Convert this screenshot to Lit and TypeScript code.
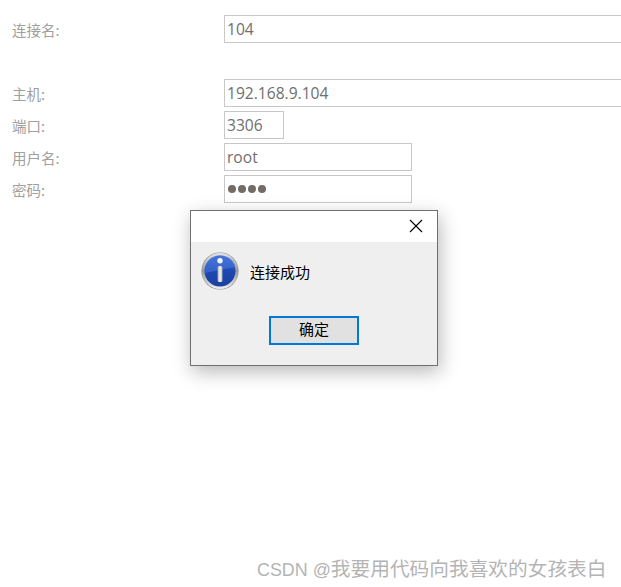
import { LitElement, html, css } from "lit";
import { customElement } from "lit/decorators.js";

@customElement("app-root")
export class AppRoot extends LitElement {
  static styles = css`
    :host {
      display: block;
      position: relative;
      width: 621px;
      height: 587px;
      overflow: hidden;
      background: #fff;
      font-family: "Open Sans", "Noto Sans CJK SC", sans-serif;
    }
    .form {
      display: flex;
      flex-direction: column;
      gap: 4px;
      padding: 15px 0 0 12px;
    }
    .row {
      display: flex;
      align-items: center;
      height: 28px;
    }
    .row.first {
      margin-bottom: 32px;
    }
    .label {
      width: 212px;
      flex: none;
      font-size: 14.5px;
      color: #a0a0a0;
      font-family: "Noto Sans CJK SC", sans-serif;
    }
    .field {
      box-sizing: border-box;
      height: 28px;
      border: 1px solid #c8c8c8;
      padding: 1px 2px 0;
      font-size: 15.6px;
      line-height: 24px;
      color: #6f6f6f;
      flex: none;
      white-space: nowrap;
      background: #fff;
    }
    .wide {
      width: 420px;
      margin-right: -30px;
      border-right: none;
    }
    .port {
      width: 60px;
    }
    .mid {
      width: 188px;
    }
    .dots {
      display: flex;
      align-items: center;
      gap: 2px;
      padding: 0 0 0 3px;
    }
    .dot {
      width: 8px;
      height: 8px;
      border-radius: 50%;
      background: #736b66;
    }
    .dialog {
      position: absolute;
      left: 190px;
      top: 210px;
      width: 248px;
      height: 156px;
      box-sizing: border-box;
      border: 1px solid #6f6f6f;
      background: #efefef;
      box-shadow: 2px 6px 18px rgba(0, 0, 0, 0.28);
      display: flex;
      flex-direction: column;
    }
    .titlebar {
      height: 31px;
      box-sizing: border-box;
      flex: none;
      background: #fff;
      display: flex;
      justify-content: flex-end;
      align-items: center;
      padding: 0 14px 1px 0;
    }
    .close {
      display: block;
      width: 14px;
      height: 14px;
    }
    .message {
      display: flex;
      align-items: center;
      gap: 11px;
      padding: 10px 0 0 10px;
      height: 38px;
      font-size: 15px;
      color: #000;
      font-family: "Noto Sans CJK SC", sans-serif;
    }
    .info {
      display: block;
      width: 38px;
      height: 38px;
      flex: none;
    }
    .actions {
      display: flex;
      justify-content: center;
      padding-top: 26px;
      padding-right: 1px;
    }
    .ok {
      box-sizing: border-box;
      width: 90px;
      height: 29px;
      border: 2px solid #0078d7;
      background: #e1e1e1;
      font-size: 15px;
      line-height: 22px;
      color: #000;
      padding: 0 0 3px 1px;
      font-family: "Noto Sans CJK SC", sans-serif;
    }
    .mark {
      position: absolute;
      left: 257px;
      top: 555px;
      font-size: 19.7px;
      line-height: 26px;
      white-space: nowrap;
      color: #b4b4b4;
      font-family: "Noto Sans CJK SC", sans-serif;
    }
    .mark .latin {
      font-size: 17.9px;
      font-family: "Liberation Sans", sans-serif;
    }
  `;

  private row(label: string, value: unknown, cls: string, rowCls = "") {
    return html`<div class="row ${rowCls}">
      <div class="label">${label}</div>
      <div class="field ${cls}">${value}</div>
    </div>`;
  }

  render() {
    return html`
      <div class="form">
        ${this.row("连接名:", "104", "wide", "first")}
        ${this.row("主机:", "192.168.9.104", "wide")}
        ${this.row("端口:", "3306", "port")}
        ${this.row("用户名:", "root", "mid")}
        <div class="row">
          <div class="label">密码:</div>
          <div class="field mid dots">
            <span class="dot"></span><span class="dot"></span><span class="dot"></span><span class="dot"></span>
          </div>
        </div>
      </div>

      <div class="dialog">
        <div class="titlebar">
          <svg class="close" viewBox="0 0 14 14">
            <path d="M1 1 L13 13 M13 1 L1 13" stroke="#000" stroke-width="1.1" fill="none" />
          </svg>
        </div>
        <div class="message">
          <svg class="info" viewBox="0 0 38 38">
            <defs>
              <linearGradient id="ring" x1="0" y1="0" x2="0" y2="1">
                <stop offset="0" stop-color="#e6e6e6" />
                <stop offset="0.5" stop-color="#9a9a9a" />
                <stop offset="1" stop-color="#f0f0f0" />
              </linearGradient>
              <linearGradient id="blue" x1="0" y1="0" x2="0" y2="1">
                <stop offset="0" stop-color="#3f70d6" />
                <stop offset="0.5" stop-color="#1e48b0" />
                <stop offset="1" stop-color="#1c3fa4" />
              </linearGradient>
              <linearGradient id="bar" x1="0" y1="0" x2="1" y2="0">
                <stop offset="0" stop-color="#a8a8a8" />
                <stop offset="0.5" stop-color="#f4f4f4" />
                <stop offset="1" stop-color="#b8b8b8" />
              </linearGradient>
            </defs>
            <circle cx="19" cy="19" r="18.6" fill="#8f8f8f" />
            <circle cx="19" cy="19" r="18" fill="url(#ring)" />
            <circle cx="19" cy="19" r="15.5" fill="url(#blue)" />
            <path d="M3.5 21 C10 20 22 17 34.5 15 C33.5 7.5 27 3.5 19 3.5 C10 3.5 3 10.5 3.5 21 Z" fill="#4a78dc" opacity="0.55" />
            <circle cx="19" cy="8.8" r="2.7" fill="#f2f4f8" />
            <rect x="16.6" y="14" width="4.8" height="16" rx="1.6" fill="url(#bar)" />
          </svg>
          <span>连接成功</span>
        </div>
        <div class="actions"><button class="ok">确定</button></div>
      </div>

      <div class="mark"><span class="latin">CSDN @</span>我要用代码向我喜欢的女孩表白</div>
    `;
  }
}
